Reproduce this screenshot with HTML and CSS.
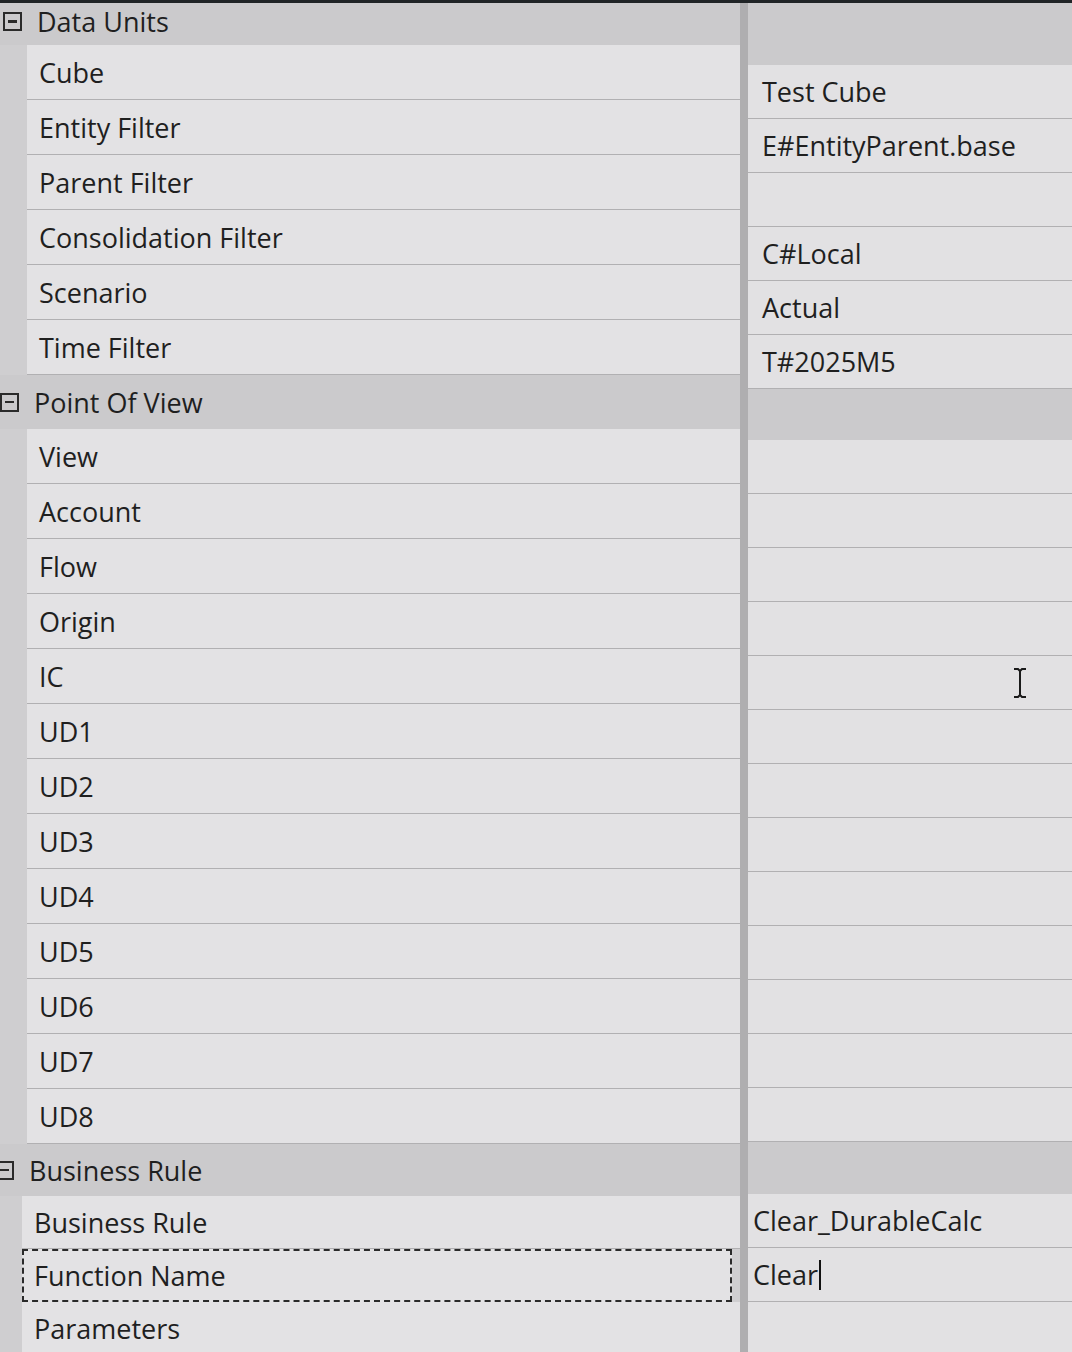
FILE: index.html
```html
<!doctype html>
<html lang="en">
  <head>
    <meta charset="utf-8">
    <title>Properties</title>
    <link rel="stylesheet" href="styles.css">
  </head>
  <body>
    <div class="topbar"></div>
    <div class="grid">
      <div class="col names">
        <div class="cat first"><span class="toggle"></span>Data Units</div>
        <div class="prop">Cube</div>
        <div class="prop">Entity Filter</div>
        <div class="prop">Parent Filter</div>
        <div class="prop">Consolidation Filter</div>
        <div class="prop">Scenario</div>
        <div class="prop">Time Filter</div>
        <div class="cat pov"><span class="toggle"></span>Point Of View</div>
        <div class="prop">View</div>
        <div class="prop">Account</div>
        <div class="prop">Flow</div>
        <div class="prop">Origin</div>
        <div class="prop">IC</div>
        <div class="prop">UD1</div>
        <div class="prop">UD2</div>
        <div class="prop">UD3</div>
        <div class="prop">UD4</div>
        <div class="prop">UD5</div>
        <div class="prop">UD6</div>
        <div class="prop">UD7</div>
        <div class="prop">UD8</div>
        <div class="cat rule"><span class="toggle"></span>Business Rule</div>
        <div class="prop short">Business Rule</div>
        <div class="prop short focused">Function Name</div>
        <div class="prop short">Parameters</div>
      </div>
      <div class="splitter"></div>
      <div class="col values">
        <div class="cat first"></div>
        <div class="val">Test Cube</div>
        <div class="val">E#EntityParent.base</div>
        <div class="val"></div>
        <div class="val">C#Local</div>
        <div class="val">Actual</div>
        <div class="val">T#2025M5</div>
        <div class="cat pov"></div>
        <div class="val"></div>
        <div class="val"></div>
        <div class="val"></div>
        <div class="val"></div>
        <div class="val"></div>
        <div class="val"></div>
        <div class="val"></div>
        <div class="val"></div>
        <div class="val"></div>
        <div class="val"></div>
        <div class="val"></div>
        <div class="val"></div>
        <div class="val"></div>
        <div class="cat rule"></div>
        <div class="val">Clear_DurableCalc</div>
        <div class="val editing">Clear<span class="caret"></span></div>
        <div class="val"></div>
        <div class="ibeam">
          <svg width="16" height="32" viewBox="0 0 16 32">
            <path d="M2 2h4l2 2l2-2h4M8 4v24M2 30h4l2-2l2 2h4" fill="none" stroke="#1a1a1a" stroke-width="2"/>
          </svg>
        </div>
      </div>
    </div>
  </body>
</html>
```

FILE: styles.css
```css
body {
  margin: 0;
  background: #cfced0;
  font-family: "Open Sans", "Noto Sans", Arial, sans-serif;
  font-size: 27px;
  color: #1f1f1f;
  overflow: hidden;
}
.topbar {
  height: 3px;
  background: #202426;
}
.grid {
  display: flex;
  height: 1349px;
}
.col {
  display: flex;
  flex-direction: column;
}
.names {
  width: 740px;
}
.values {
  flex: 1;
  position: relative;
  background: #e2e1e3;
}
.splitter {
  width: 8px;
  background: #afaeb0;
}
.cat {
  display: flex;
  align-items: center;
  background: #cbcacc;
  flex: none;
}
.names .cat {
  padding-left: 3px;
}
.names .cat.first {
  height: 42px;
  align-items: flex-start;
}
.values .cat.first {
  height: 62px;
}
.names .cat.pov {
  height: 54px;
  padding-left: 0;
}
.values .cat.pov {
  height: 51px;
}
.names .cat.rule {
  height: 52px;
  padding-left: 0;
}
.values .cat.rule {
  height: 52px;
}
.toggle {
  width: 15px;
  height: 15px;
  border: 2.5px solid #2a2a2a;
  margin-right: 15px;
  position: relative;
  flex: none;
}
.names .cat.first .toggle {
  margin-top: 9px;
}
.names .cat.rule .toggle {
  margin-left: -5px;
}
.toggle::after {
  content: "";
  position: absolute;
  left: 3px;
  right: 3px;
  top: 6px;
  height: 2.5px;
  background: #2a2a2a;
}
.prop {
  height: 55px;
  flex: none;
  box-sizing: border-box;
  margin-left: 27px;
  padding-left: 12px;
  display: flex;
  align-items: center;
  background: #e3e2e4;
  border-bottom: 1px solid #b1b0b2;
}
.prop.short {
  height: 53px;
  margin-left: 22px;
}
.prop.focused {
  border: 2px dashed #2a2a2a;
  padding-left: 10px;
  margin-right: 8px;
}
.val {
  height: 54px;
  flex: none;
  box-sizing: border-box;
  padding-left: 14px;
  display: flex;
  align-items: center;
  border-bottom: 1px solid #b1b0b2;
}
.cat.rule ~ .val {
  padding-left: 5px;
}
.caret {
  width: 2px;
  height: 30px;
  background: #111;
  margin-left: 1px;
}
.ibeam {
  position: absolute;
  left: 264px;
  top: 664px;
}
```
